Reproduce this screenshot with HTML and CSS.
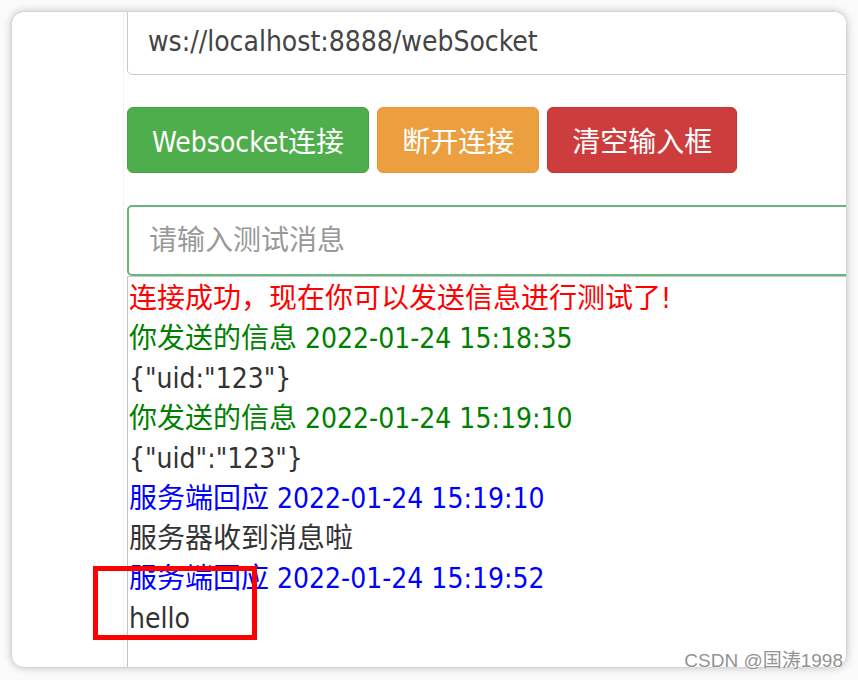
FILE: index.html
```html
<!DOCTYPE html>
<html lang="zh-CN">
<head>
<meta charset="utf-8">
<title>WebSocket 测试</title>
<link rel="stylesheet" href="styles.css">
</head>
<body>
<div class="window">
  <div class="column">
    <input class="field" type="text" value="ws://localhost:8888/webSocket">
    <div class="actions">
      <button class="btn btn-success">Websocket连接</button>
      <button class="btn btn-warning">断开连接</button>
      <button class="btn btn-danger">清空输入框</button>
    </div>
    <input class="field field-success" type="text" placeholder="请输入测试消息">
    <div class="log">
      <div class="line red">连接成功，现在你可以发送信息进行测试了!</div>
      <div class="line green">你发送的信息 2022-01-24 15:18:35</div>
      <div class="line">{"uid:"123"}</div>
      <div class="line green">你发送的信息 2022-01-24 15:19:10</div>
      <div class="line">{"uid":"123"}</div>
      <div class="line blue">服务端回应 2022-01-24 15:19:10</div>
      <div class="line">服务器收到消息啦</div>
      <div class="line blue">服务端回应 2022-01-24 15:19:52</div>
      <div class="line">hello</div>
    </div>
  </div>
  <div class="mark"></div>
</div>
<div class="watermark">CSDN @国涛1998</div>
</body>
</html>
```
FILE: styles.css
```css
html, body {
  margin: 0;
  padding: 0;
  background: #fbfbfb;
}

body {
  padding: 12px;
  width: 834px;
  height: 656px;
  position: relative;
  font-family: "DejaVu Sans Condensed", "DejaVu Sans", "Noto Sans CJK SC", sans-serif;
  font-stretch: condensed;
  font-size: 28px;
}

.window {
  position: relative;
  width: 834px;
  height: 655px;
  background: #fff;
  border-radius: 12px;
  overflow: hidden;
  box-shadow: 0 0 10px rgba(0, 0, 0, 0.28), 0 0 2px rgba(0, 0, 0, 0.12);
}

.column {
  margin-top: -5px;
  margin-left: 111px;
  padding-left: 3px;
  border-left: 1px solid #f3f3f3;
  width: 800px;
  height: 700px;
}

.field {
  display: block;
  box-sizing: border-box;
  width: 100%;
  height: 68px;
  margin: 0;
  padding: 0 20px;
  border: 1px solid #cccccc;
  border-radius: 5px;
  background: #fff;
  color: #444;
  font: inherit;
  font-stretch: condensed;
  outline: none;
}

.field::placeholder {
  color: #999;
}

.field-success {
  height: 71px;
  margin-top: 32px;
  border: 2px solid #6ab47e;
}

.actions {
  display: flex;
  gap: 8px;
  margin-top: 32px;
}

.btn {
  height: 66px;
  padding: 0 24px;
  border: 1px solid transparent;
  border-radius: 6px;
  color: #fff;
  font: inherit;
  font-stretch: condensed;
  white-space: nowrap;
}

.btn-success {
  background: #4eae4b;
  border-color: #46a344;
}

.btn-warning {
  background: #eb9f3f;
  border-color: #e69532;
}

.btn-danger {
  background: #cd3d3d;
  border-color: #c43333;
}

.log {
  border-top: 1px solid #c8c8c8;
  border-left: 1px solid #c4c4c4;
  padding-left: 1px;
  padding-top: 2px;
  height: 500px;
}

.line {
  line-height: 40px;
  height: 40px;
  color: #333;
  white-space: nowrap;
}

.red { color: #ff0000; }
.green { color: #008000; }
.blue { color: #0000ff; }

.mark {
  position: absolute;
  left: 81px;
  top: 554px;
  width: 154px;
  height: 64px;
  border: 5px solid #ff0000;
}

.watermark {
  position: absolute;
  right: 15px;
  bottom: 10px;
  font-family: "Liberation Sans", "Noto Sans CJK SC", sans-serif;
  font-size: 19px;
  line-height: 19px;
  color: #939393;
  text-shadow: 0 0 2px #fff, 0 0 2px #fff;
}
```
